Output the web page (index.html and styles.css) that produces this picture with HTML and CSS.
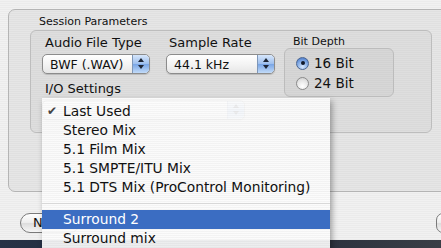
FILE: index.html
```html
<!DOCTYPE html>
<html lang="en">
<head>
  <meta charset="UTF-8" />
  <title>Session Parameters</title>
  <link rel="stylesheet" href="styles.css">
</head>
<body>

  <div class="window">
    <div class="outer-box">
      <div class="legend">Session Parameters</div>
      <div class="inner-box">
        <div class="field">
          <div class="field-label">Audio File Type</div>
          <div class="popup">
            <span class="popup-text">BWF (.WAV)</span>
            <span class="popup-arrows"></span>
          </div>
        </div>
        <div class="field">
          <div class="field-label">Sample Rate</div>
          <div class="popup">
            <span class="popup-text">44.1 kHz</span>
            <span class="popup-arrows"></span>
          </div>
        </div>
        <div class="bit-depth">
          <div class="small-label">Bit Depth</div>
          <div class="radio-box">
            <div class="radio-row"><span class="radio checked"></span>16 Bit</div>
            <div class="radio-row"><span class="radio"></span>24 Bit</div>
          </div>
        </div>
        <div class="field io-field">
          <div class="field-label">I/O Settings</div>
          <!-- covered by the open menu, only the arrows show through -->
          <div class="popup io-popup">
            <span class="popup-text"></span>
            <span class="popup-arrows"></span>
          </div>
        </div>
      </div>
    </div>
    <div class="footer">
      <div class="round-btn">N</div>
      <div class="round-btn right-btn"></div>
    </div>

    <!-- popup menu opened from I/O Settings -->
    <ul class="menu">
      <li class="menu-item"><span class="check">&#10004;</span>Last Used</li>
      <li class="menu-item">Stereo Mix</li>
      <li class="menu-item">5.1 Film Mix</li>
      <li class="menu-item">5.1 SMPTE/ITU Mix</li>
      <li class="menu-item">5.1 DTS Mix (ProControl Monitoring)</li>
      <li class="separator"></li>
      <li class="menu-item selected">Surround 2</li>
      <li class="menu-item">Surround mix</li>
    </ul>
  </div>
  <div class="desktop"></div>

</body>
</html>
```

FILE: styles.css
```css
body {
  margin: 0;
  width: 441px;
  height: 248px;
  overflow: hidden;
  font-family: "DejaVu Sans", sans-serif;
  color: #111;
}
.window {
  position: relative;
  height: 240px;
  padding: 9px 0 0 8px;
  box-sizing: border-box;
  background: repeating-linear-gradient(#f1f1f1 0 1px, #ebebeb 1px 2px);
}
.outer-box {
  width: 445px;
  height: 183px;
  box-sizing: border-box;
  border: 1px solid #b4b4b4;
  border-radius: 7px;
  background: repeating-linear-gradient(#e6e6e6 0 1px, #e0e0e0 1px 2px);
  padding: 5px 0 0 21px;
}
.legend {
  font-size: 11px;
  line-height: 14px;
  padding-left: 9px;
  height: 15px;
}
.inner-box {
  width: 402px;
  height: 103px;
  box-sizing: border-box;
  border: 1px solid #bdbdbd;
  border-radius: 6px;
  background: repeating-linear-gradient(#dedede 0 1px, #d9d9d9 1px 2px);
  padding: 3px 0 0 11px;
  display: grid;
  grid-template-columns: 108px 109px 109px;
  grid-template-rows: 46px auto;
  column-gap: 16px;
}
.field-label {
  font-size: 13px;
  line-height: 17px;
  padding-left: 3px;
  margin-bottom: 3px;
}
.popup {
  height: 20px;
  box-sizing: border-box;
  border: 1px solid #8c8c8c;
  border-radius: 5px;
  background: linear-gradient(#ffffff, #f4f4f4 50%, #e6e6e6);
  display: flex;
  align-items: center;
  justify-content: space-between;
  box-shadow: 0 1px 1px rgba(0,0,0,0.15);
  overflow: hidden;
}
.popup-text {
  font-size: 12.5px;
  padding-left: 7px;
}
.popup-arrows {
  width: 16px;
  height: 18px;
  border-left: 1px solid #7f97b8;
  border-radius: 0 4px 4px 0;
  background: linear-gradient(#d6e6fb, #9fc0ee 48%, #7aa6e6 52%, #c2dbf8);
  position: relative;
}
.popup-arrows::before,
.popup-arrows::after {
  content: "";
  position: absolute;
  left: 5px;
  border-left: 3px solid transparent;
  border-right: 3px solid transparent;
}
.popup-arrows::before {
  top: 3px;
  border-bottom: 4px solid #1d2535;
}
.popup-arrows::after {
  top: 10px;
  border-top: 4px solid #1d2535;
}
.bit-depth {
  grid-row: 1 / 3;
  grid-column: 3;
  margin-left: -7px;
}
.small-label {
  font-size: 11px;
  line-height: 14px;
  padding: 1px 0 0 9px;
  height: 13px;
}
.radio-box {
  width: 110px;
  height: 49px;
  box-sizing: border-box;
  border: 1px solid #bcbcbc;
  border-radius: 6px;
  background: repeating-linear-gradient(#d7d7d7 0 1px, #d2d2d2 1px 2px);
  padding: 4px 0 0 11px;
}
.radio-row {
  display: flex;
  align-items: center;
  font-size: 13.5px;
  line-height: 20px;
  gap: 5px;
}
.radio {
  width: 13px;
  height: 13px;
  box-sizing: border-box;
  border-radius: 50%;
  border: 1px solid #8a8a8a;
  background: radial-gradient(circle at 50% 75%, #ffffff, #e4e4e4 60%, #c8c8c8);
  position: relative;
}
.radio.checked {
  border-color: #4a6590;
  background: radial-gradient(circle at 50% 80%, #d8e8fc, #7fa8e4 55%, #3d6ec2);
}
.radio.checked::after {
  content: "";
  position: absolute;
  left: 3.5px;
  top: 3.5px;
  width: 4px;
  height: 4px;
  border-radius: 50%;
  background: #10182a;
}
.io-field {
  grid-column: 1 / 3;
}
.io-popup {
  width: 203px;
}
.footer {
  height: 48px;
  display: flex;
  justify-content: space-between;
  align-items: flex-start;
  padding: 21px 0 0 12px;
  box-sizing: border-box;
}
.round-btn {
  width: 60px;
  height: 20px;
  box-sizing: border-box;
  border: 1px solid #7a7a7a;
  border-radius: 10px;
  background: linear-gradient(#ffffff, #ececec 50%, #dcdcdc 51%, #f6f6f6);
  font-size: 13px;
  line-height: 18px;
  padding-left: 12px;
}
.right-btn {
  width: 10px;
  margin-right: -9px;
}
.menu {
  position: absolute;
  left: 42px;
  top: 98px;
  width: 288px;
  height: 150px;
  margin: 0;
  padding: 4px 0 0;
  box-sizing: border-box;
  list-style: none;
  overflow: hidden;
  background: repeating-linear-gradient(rgba(252,252,252,0.93) 0 1px, rgba(244,244,244,0.93) 1px 2px);
  box-shadow: 2px 3px 6px rgba(0,0,0,0.35);
}
.menu-item {
  position: relative;
  height: 19px;
  line-height: 19px;
  font-size: 13.8px;
  padding-left: 21px;
  white-space: nowrap;
}
.check {
  position: absolute;
  left: 5px;
  font-size: 12px;
  color: #444;
}
.separator {
  height: 13px;
  background: linear-gradient(#d8d8d8 0 0) no-repeat 0 6px / 100% 1px;
}
.menu-item.selected {
  background: #3b6dc2;
  color: #fff;
}
.desktop {
  height: 8px;
  background: linear-gradient(to right, #273246, #1f2838 50%, #3a3e46);
}
```
